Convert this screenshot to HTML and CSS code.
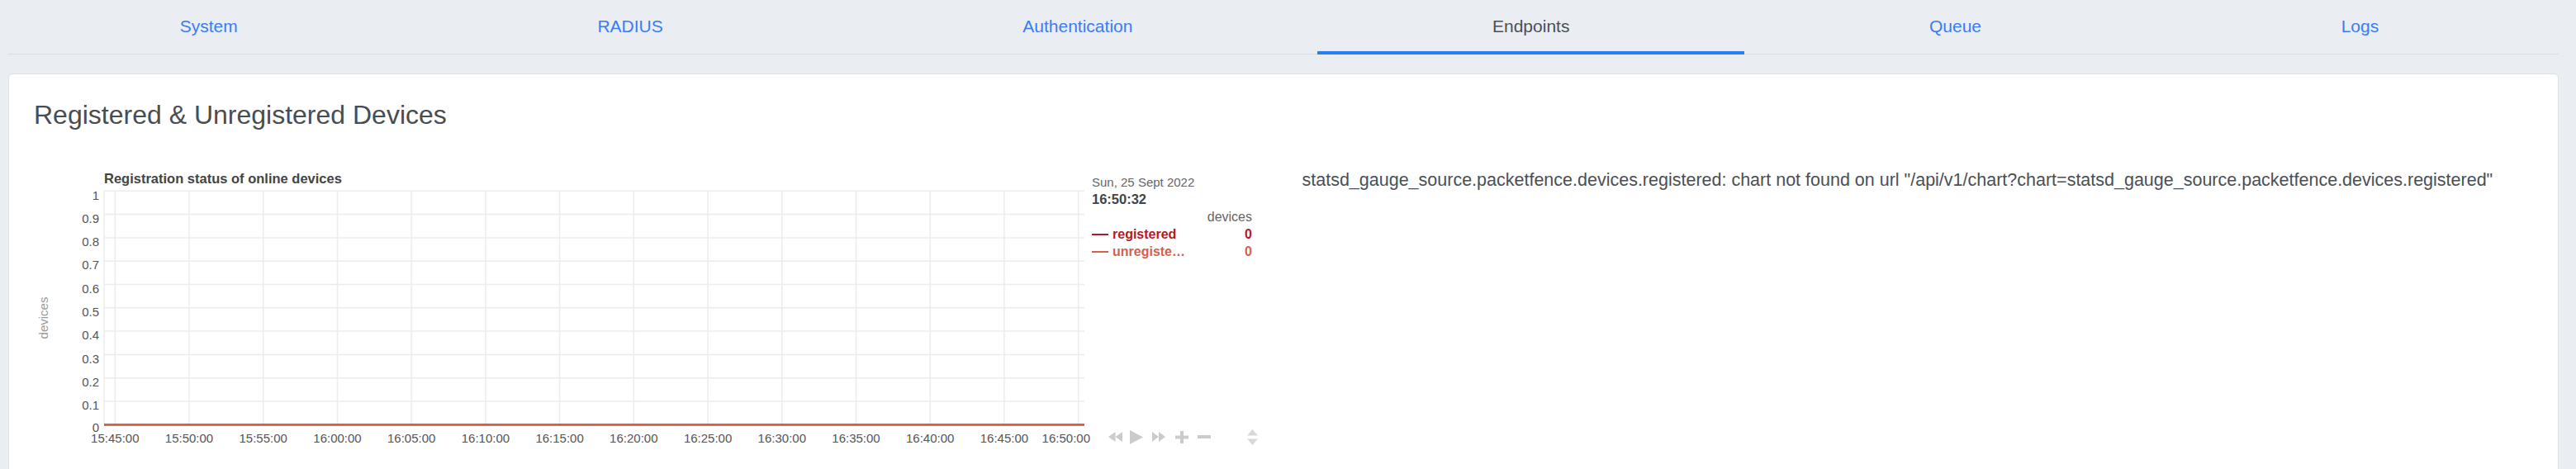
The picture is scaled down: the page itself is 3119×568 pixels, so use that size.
FILE: index.html
```html
<!DOCTYPE html>
<html lang="en">
<head>
<meta charset="utf-8">
<title>Endpoints</title>
<link rel="stylesheet" href="styles.css">
</head>
<body>
<div class="page">
  <nav class="tabs">
    <div class="tab"><a class="tab-link">System</a></div>
    <div class="tab"><a class="tab-link">RADIUS</a></div>
    <div class="tab"><a class="tab-link">Authentication</a></div>
    <div class="tab"><a class="tab-link active">Endpoints</a></div>
    <div class="tab"><a class="tab-link">Queue</a></div>
    <div class="tab"><a class="tab-link">Logs</a></div>
  </nav>

  <section class="card">
    <div class="card-body">
      <h4 class="card-title">Registered &amp; Unregistered Devices</h4>
      <div class="row">
        <div class="col">
          <div class="chart">
            <svg class="plot" width="1281" height="355" viewBox="0 0 1281 355">
              <text class="plot-title" x="85" y="27.3">Registration status of online devices</text>
              <text class="axis-name" transform="translate(17 190) rotate(-90)" text-anchor="middle">devices</text>
              <g class="grid">
                <line x1="85" y1="36.3" x2="1272" y2="36.3"/>
                <line x1="85" y1="64.6" x2="1272" y2="64.6"/>
                <line x1="85" y1="92.9" x2="1272" y2="92.9"/>
                <line x1="85" y1="121.2" x2="1272" y2="121.2"/>
                <line x1="85" y1="149.5" x2="1272" y2="149.5"/>
                <line x1="85" y1="177.8" x2="1272" y2="177.8"/>
                <line x1="85" y1="206.1" x2="1272" y2="206.1"/>
                <line x1="85" y1="234.4" x2="1272" y2="234.4"/>
                <line x1="85" y1="262.7" x2="1272" y2="262.7"/>
                <line x1="85" y1="291" x2="1272" y2="291"/>
                <line x1="85" y1="36.3" x2="85" y2="319.3"/>
                <line x1="98.3" y1="36.3" x2="98.3" y2="319.3"/>
                <line x1="188" y1="36.3" x2="188" y2="319.3"/>
                <line x1="277.7" y1="36.3" x2="277.7" y2="319.3"/>
                <line x1="367.5" y1="36.3" x2="367.5" y2="319.3"/>
                <line x1="457.2" y1="36.3" x2="457.2" y2="319.3"/>
                <line x1="546.9" y1="36.3" x2="546.9" y2="319.3"/>
                <line x1="636.6" y1="36.3" x2="636.6" y2="319.3"/>
                <line x1="726.3" y1="36.3" x2="726.3" y2="319.3"/>
                <line x1="816.1" y1="36.3" x2="816.1" y2="319.3"/>
                <line x1="905.8" y1="36.3" x2="905.8" y2="319.3"/>
                <line x1="995.5" y1="36.3" x2="995.5" y2="319.3"/>
                <line x1="1085.2" y1="36.3" x2="1085.2" y2="319.3"/>
                <line x1="1174.9" y1="36.3" x2="1174.9" y2="319.3"/>
                <line x1="1264.7" y1="36.3" x2="1264.7" y2="319.3"/>
              </g>
              <g class="ticks" text-anchor="end">
                <text x="79" y="46.5">1</text>
                <text x="79" y="74.8">0.9</text>
                <text x="79" y="103.1">0.8</text>
                <text x="79" y="131.4">0.7</text>
                <text x="79" y="159.7">0.6</text>
                <text x="79" y="188">0.5</text>
                <text x="79" y="216.3">0.4</text>
                <text x="79" y="244.6">0.3</text>
                <text x="79" y="272.9">0.2</text>
                <text x="79" y="301.2">0.1</text>
                <text x="79" y="328">0</text>
              </g>
              <g class="ticks" text-anchor="middle">
                <text x="98.3" y="341">15:45:00</text>
                <text x="188" y="341">15:50:00</text>
                <text x="277.7" y="341">15:55:00</text>
                <text x="367.5" y="341">16:00:00</text>
                <text x="457.2" y="341">16:05:00</text>
                <text x="546.9" y="341">16:10:00</text>
                <text x="636.6" y="341">16:15:00</text>
                <text x="726.3" y="341">16:20:00</text>
                <text x="816.1" y="341">16:25:00</text>
                <text x="905.8" y="341">16:30:00</text>
                <text x="995.5" y="341">16:35:00</text>
                <text x="1085.2" y="341">16:40:00</text>
                <text x="1174.9" y="341">16:45:00</text>
                <text x="1279" y="341" text-anchor="end">16:50:00</text>
              </g>
              <line class="series series-reg" x1="85" y1="319.3" x2="1272" y2="319.3"/>
              <line class="series series-unreg" x1="85" y1="319.3" x2="1272" y2="319.3"/>
            </svg>

            <div class="legend">
              <div class="lg-date">Sun, 25 Sept 2022</div>
              <div class="lg-time">16:50:32</div>
              <div class="lg-head">devices</div>
              <div class="lg-row lg-reg"><span class="lg-dash"></span><span class="lg-name">registered</span><span class="lg-val">0</span></div>
              <div class="lg-row lg-unreg" title="unregistered"><span class="lg-dash"></span><span class="lg-name">unregiste…</span><span class="lg-val">0</span></div>

              <div class="controls">
                <svg class="ctl ctl-rew" width="17" height="12" viewBox="0 0 17 12"><path d="M0 6L8.5 0V12Z M8.5 6L17 0V12Z"/></svg>
                <svg class="ctl ctl-play" width="16" height="17" viewBox="0 0 16 17"><path d="M0 0L16 8.5L0 17Z"/></svg>
                <svg class="ctl ctl-ff" width="16" height="12" viewBox="0 0 16 12"><path d="M0 0L8 6L0 12Z M8 0L16 6L8 12Z"/></svg>
                <svg class="ctl ctl-plus" width="16" height="15" viewBox="0 0 16 15"><path d="M6 0H10V5.5H16V9.5H10V15H6V9.5H0V5.5H6Z"/></svg>
                <svg class="ctl ctl-minus" width="16" height="4" viewBox="0 0 16 4"><rect width="16" height="4"/></svg>
                <svg class="ctl ctl-resize" width="13" height="19" viewBox="0 0 13 19"><path d="M6.5 0L13 7.5H0Z M0 11.5H13L6.5 19Z"/></svg>
              </div>
            </div>
          </div>
        </div>
        <div class="col">
          <p class="msg">statsd_gauge_source.packetfence.devices.registered: chart not found on url "/api/v1/chart?chart=statsd_gauge_source.packetfence.devices.registered"</p>
        </div>
      </div>
    </div>
  </section>
</div>
</body>
</html>
```

FILE: styles.css
```css
html, body {
  margin: 0;
  padding: 0;
}

body {
  background: #eaedf2;
  font-family: "Liberation Sans", Arial, sans-serif;
  color: #495057;
  overflow: hidden;
}

.page {
  padding: 0 21px 0 10px;
}

/* ---------- tabs ---------- */
.tabs {
  display: flex;
  margin-left: -10px;
  background: linear-gradient(#d9dde3, #d9dde3) no-repeat 10px 100% / calc(100% - 10px) 1px;
}

.tab {
  flex: 1 1 auto;
  text-align: center;
}

.tab-link {
  display: block;
  margin: 0 6px;
  padding: 2px 0 0;
  line-height: 60px;
  font-size: 21px;
  color: #3a7cf4;
  border-bottom: 4px solid transparent;
  cursor: pointer;
}

.tab-link.active {
  color: #495057;
  border-bottom-color: #2a7df3;
}

/* ---------- card ---------- */
.card {
  margin-top: 23px;
  background: #fff;
  border: 1px solid #dcdfe4;
  border-radius: 5px;
}

.card-body {
  padding: 30px;
}

.card-title {
  margin: 0 0 37px;
  font-size: 32px;
  font-weight: 400;
  line-height: 1.2;
  color: #484d53;
}

.row {
  display: grid;
  grid-template-columns: 1fr 1fr;
  column-gap: 45px;
}

.col {
  min-width: 0;
}

/* ---------- chart ---------- */
.chart {
  display: flex;
  height: 355px;
}

.plot {
  display: block;
  flex: none;
  font-family: "Liberation Sans", Arial, sans-serif;
}

.plot-title {
  font-size: 16.5px;
  font-weight: 700;
  fill: #444;
}

.axis-name {
  font-size: 15px;
  fill: #9a9a9a;
}

.grid line {
  stroke: #ececec;
  stroke-width: 1.5;
}

.ticks text {
  font-size: 15px;
  fill: #555;
}

.series {
  stroke-width: 2.2;
}

.series-reg {
  stroke: #b2182b;
}

.series-unreg {
  stroke: #d6604d;
}

/* ---------- legend ---------- */
.legend {
  width: 200px;
  flex: none;
  display: flex;
  flex-direction: column;
  padding-top: 15px;
  box-sizing: border-box;
}

.lg-date {
  font-size: 15px;
  line-height: 21px;
  color: #666;
}

.lg-time {
  font-size: 16.5px;
  font-weight: 700;
  line-height: 21px;
  color: #444;
}

.lg-head {
  width: 194px;
  text-align: right;
  font-size: 16px;
  line-height: 21px;
  color: #666;
}

.lg-row {
  width: 194px;
  display: flex;
  align-items: center;
  font-size: 16px;
  font-weight: 700;
  line-height: 21px;
}

.lg-reg {
  color: #b2182b;
}

.lg-unreg {
  color: #d6604d;
}

.lg-dash {
  width: 20px;
  height: 2px;
  margin-right: 5px;
  background: currentColor;
  flex: none;
}

.lg-name {
  white-space: nowrap;
}

.lg-val {
  margin-left: auto;
}

.controls {
  margin-top: auto;
  margin-bottom: 11px;
  height: 20px;
  padding-left: 20px;
  display: flex;
  align-items: center;
}

.ctl {
  display: block;
  fill: #cbcbcb;
  flex: none;
}

.ctl-play { margin-left: 9px; }
.ctl-ff { margin-left: 11px; }
.ctl-plus { margin-left: 12px; }
.ctl-minus { margin-left: 11px; }
.ctl-resize { margin-left: 44px; fill: #d8d8d8; }

/* ---------- message ---------- */
.msg {
  margin: 0;
  padding-top: 7px;
  font-size: 21.5px;
  line-height: 1.5;
  color: #495057;
  white-space: nowrap;
}
```
